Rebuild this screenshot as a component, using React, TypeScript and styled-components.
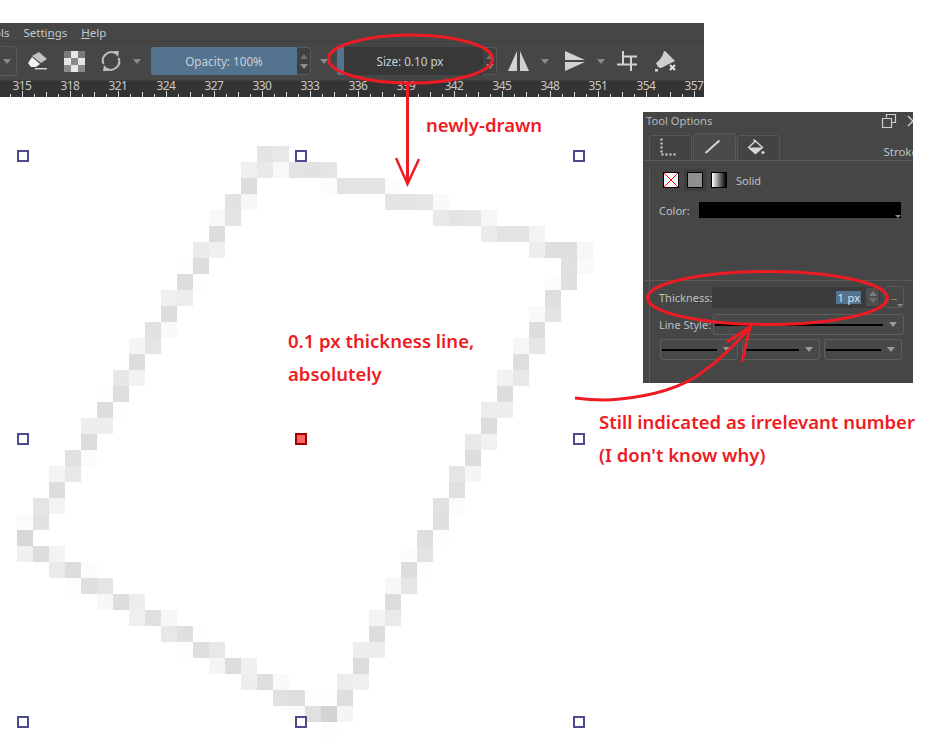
import React from "react";
import styled, { createGlobalStyle } from "styled-components";

const Global = createGlobalStyle`
  html, body { margin: 0; padding: 0; background: #fff; }
  body { font-family: "Noto Sans", "Liberation Sans", sans-serif; }
`;

const Stage = styled.div`
  position: relative;
  width: 935px;
  height: 754px;
  padding-top: 23px;
  box-sizing: border-box;
  overflow: hidden;
  background: #fff;
`;

const KritaBar = styled.div`
  width: 704px;
  background: #464646;
  color: #c3c9cc;
  font-size: 11.7px;
  overflow: hidden;
`;

const MenuRow = styled.div`
  height: 19px;
  box-sizing: border-box;
  display: flex;
  align-items: center;
  margin-left: -6px;
  gap: 14px;
  font-size: 11.5px;
  padding-top: 1px;
  border-bottom: 1px solid #3e3e3e;
`;

const MenuItem = styled.span`
  line-height: 18px;
  u { text-underline-offset: 1px; }
`;

const ToolRow = styled.div`
  height: 38px;
  display: flex;
  align-items: center;
`;

const CutCombo = styled.div`
  width: 17px;
  height: 30px;
  box-sizing: border-box;
  border: 1px solid #5a5a5a;
  border-left: none;
  border-radius: 0 4px 4px 0;
  display: flex;
  align-items: center;
  padding-left: 3px;
`;

const Caret = styled.span<{ $ml?: number; $c?: string }>`
  display: block;
  flex: none;
  width: 0;
  height: 0;
  margin-left: ${(p) => p.$ml ?? 0}px;
  border-left: 4px solid transparent;
  border-right: 4px solid transparent;
  border-top: 5px solid ${(p) => p.$c ?? "#8a8a8a"};
`;

const IconSlot = styled.svg<{ $ml: number; $w: number }>`
  display: block;
  flex: none;
  margin-left: ${(p) => p.$ml}px;
  width: ${(p) => p.$w}px;
  height: 22px;
`;

const SliderBox = styled.div<{ $ml: number }>`
  display: flex;
  flex: none;
  margin-left: ${(p) => p.$ml}px;
  width: 160px;
  height: 28px;
`;

const Track = styled.div<{ $fill: number }>`
  width: 146px;
  height: 28px;
  line-height: 29px;
  text-align: center;
  color: #c8d2da;
  border-radius: 2px 0 0 2px;
  background: linear-gradient(
    to right,
    #54738f ${(p) => p.$fill}%,
    #383838 ${(p) => p.$fill}%
  );
`;

const Spin = styled.div`
  flex: 1;
  box-sizing: border-box;
  border: 1px solid #585858;
  border-left: none;
  border-radius: 0 4px 4px 0;
  display: flex;
  flex-direction: column;
  align-items: center;
  justify-content: center;
  gap: 5px;
  background: #404040;
`;

const SpinUp = styled.span<{ $c?: string }>`
  width: 0;
  height: 0;
  border-left: 4px solid transparent;
  border-right: 4px solid transparent;
  border-bottom: 5px solid ${(p) => p.$c ?? "#707070"};
`;

const SpinDown = styled.span<{ $c?: string }>`
  width: 0;
  height: 0;
  border-left: 4px solid transparent;
  border-right: 4px solid transparent;
  border-top: 5px solid ${(p) => p.$c ?? "#8e8e8e"};
`;

const Ruler = styled.div`
  height: 17px;
  background: #333;
  display: flex;
  margin-left: -2px;
  border-top: 1px solid #3b3b3b;
  box-sizing: border-box;
`;

const RulerCell = styled.div`
  flex: none;
  width: 48px;
  display: flex;
  flex-direction: column;
  justify-content: flex-end;
  align-items: stretch;
`;

const RulerLabel = styled.span`
  height: 13px;
  line-height: 13px;
  margin-bottom: -1px;
  text-align: center;
  font-size: 12px;
  color: #c9c9c9;
  letter-spacing: -0.6px;
`;

const TickRow = styled.div`
  display: flex;
  align-items: flex-end;
  height: 6px;
`;

const Tick = styled.i<{ $h: number }>`
  display: block;
  box-sizing: border-box;
  width: 12px;
  height: ${(p) => p.$h}px;
  border-left: 1px solid #dcdcdc;
`;

const Panel = styled.section`
  position: absolute;
  left: 643px;
  top: 112px;
  width: 270px;
  height: 271px;
  background: #464646;
  color: #bcc1c4;
  font-size: 11px;
  overflow: hidden;
`;

const TitleBar = styled.header`
  height: 17px;
  padding: 0 0 1px 3px;
  display: flex;
  align-items: center;
  font-size: 11.2px;
  color: #b4babd;
`;

const TitleText = styled.span`
  flex: 1;
`;

const TitleIcon = styled.svg<{ $mr: number }>`
  display: block;
  width: 16px;
  height: 16px;
  margin-right: ${(p) => p.$mr}px;
  flex: none;
`;

const TabRow = styled.div`
  display: flex;
  align-items: flex-end;
  height: 31px;
  padding-left: 6px;
  box-sizing: border-box;
  border-bottom: 1px solid #5a5a5a;
`;

const Tab = styled.div<{ $active?: boolean }>`
  flex: none;
  width: 43px;
  box-sizing: border-box;
  height: ${(p) => (p.$active ? 27 : 25)}px;
  margin-right: 1px;
  background: ${(p) => (p.$active ? "#4a4a4a" : "#434343")};
  border: 1px solid #585858;
  border-bottom: none;
  border-radius: 4px 4px 0 0;
  display: flex;
  align-items: center;
  justify-content: center;
`;

const TabIcon = styled.svg`
  display: block;
  width: 24px;
  height: 22px;
`;

const StrokeTab = styled.span`
  margin-left: auto;
  margin-right: -5px;
  margin-bottom: 1px;
  font-size: 11.5px;
  white-space: nowrap;
`;

const TabBody = styled.div`
  margin-left: 6px;
  height: 223px;
  border-left: 1px solid #5a5a5a;
`;

const SwatchRow = styled.div`
  display: flex;
  align-items: center;
  height: 22px;
  margin-top: 8px;
  padding-left: 11px;
`;

const Swatch = styled.div<{ $kind: "none" | "flat" | "grad" }>`
  flex: none;
  box-sizing: border-box;
  width: 16px;
  height: 16px;
  margin: 0 8px 0 ${(p) => (p.$kind === "none" ? 2 : 0)}px;
  border: 1px solid #000;
  outline: ${(p) => (p.$kind === "flat" ? "3px solid #3e3e3e" : "none")};
  background: ${(p) =>
    p.$kind === "flat"
      ? "#8f8f8f"
      : p.$kind === "grad"
        ? "linear-gradient(to right, #fff, #000)"
        : `linear-gradient(45deg, #fff 47%, #f00 47%, #f00 53%, #fff 53%) , #fff`};
  position: relative;
`;

const SwatchCross = styled.span`
  position: absolute;
  inset: 0;
  background: linear-gradient(-45deg, transparent 47%, #f00 47%, #f00 53%, transparent 53%);
`;

const SwatchLabel = styled.span`
  margin-left: 1px;
`;

const FieldRow = styled.div<{ $top: number; $h?: number }>`
  display: flex;
  align-items: center;
  margin-top: ${(p) => p.$top}px;
  height: ${(p) => p.$h ?? 16}px;
  padding-left: 9px;
`;

const FieldLabel = styled.span<{ $w: number }>`
  flex: none;
  width: ${(p) => p.$w}px;
  white-space: nowrap;
`;

const ColorBar = styled.div`
  position: relative;
  width: 202px;
  height: 16px;
  background: #000;
`;

const BarCaret = styled.span`
  position: absolute;
  right: 0;
  bottom: 0;
  width: 0;
  height: 0;
  border-left: 3px solid transparent;
  border-right: 3px solid transparent;
  border-top: 3px solid #8a8a8a;
`;

const Divider = styled.div`
  margin-top: 62px;
  height: 1px;
  background: #5a5a5a;
  margin-left: -6px;
`;

const ThickInput = styled.div`
  width: 168px;
  height: 21px;
  box-sizing: border-box;
  background: #3b3b3b;
  border-radius: 3px;
  display: flex;
  align-items: center;
  justify-content: flex-end;
  padding-right: 1px;
`;

const Selected = styled.span`
  background: #54738f;
  color: #dfe6ea;
  height: 13px;
  line-height: 13px;
  padding: 0 1px;
  word-spacing: 1px;
  margin-right: 5px;
`;

const ThickSpin = styled.div`
  width: 13px;
  height: 18px;
  background: #4e4e4e;
  display: flex;
  flex-direction: column;
  align-items: center;
  justify-content: center;
  gap: 2px;
`;

const MoreButton = styled.div`
  position: relative;
  margin-left: 4px;
  width: 20px;
  height: 22px;
  box-sizing: border-box;
  border: 1px solid #5a5a5a;
  border-radius: 4px;
  font-size: 9px;
  line-height: 20px;
  padding-left: 6px;
  letter-spacing: -0.5px;
`;

const Combo = styled.div<{ $w: number; $ml?: number }>`
  flex: none;
  width: ${(p) => p.$w}px;
  height: 21px;
  box-sizing: border-box;
  margin-left: ${(p) => p.$ml ?? 0}px;
  border: 1px solid #5e5e5e;
  border-radius: 3px;
  background: #484848;
  display: flex;
  align-items: center;
  padding: 0 6px 0 1px;
`;

const ComboLine = styled.span`
  flex: 1;
  height: 2px;
  background: #000;
  margin-right: 6px;
`;

const ComboGroup = styled.div`
  display: flex;
  margin-top: 4px;
  padding-left: 10px;
`;

const Overlay = styled.svg`
  position: absolute;
  left: 0;
  top: 0;
  width: 935px;
  height: 754px;
  pointer-events: none;
`;

const Note = styled.div<{ $x: number; $y: number }>`
  position: absolute;
  left: ${(p) => p.$x}px;
  top: ${(p) => p.$y}px;
  color: #ed1c24;
  font-family: "Noto Sans", "Liberation Sans", sans-serif;
  font-weight: 600;
  font-size: 18.5px;
  line-height: 33px;
  white-space: nowrap;
`;

const pixels: [number, string][] = [
  [9, "16e4 17e8"],
  [10, "15f0 16e9 17f8 18e3 19e2 20e5"],
  [11, "15dd 20fc 21e3 22e3 23e3 24fc"],
  [12, "14e2 15f7 24e4 25e3 26e6 27fa"],
  [13, "13f8 14e4 27e9 28e4 29e6 30f6"],
  [14, "13dd 30eb 31e3 32e3 33f3"],
  [15, "12eb 13f0 33ee 34df 35df 36f6"],
  [16, "11fd 12dd 35e0 36f9"],
  [17, "11dd 12fe 34fc 35df"],
  [18, "10f0 11ec 34df"],
  [19, "10dd 33f9 34e3"],
  [20, "09e1 10f9 33dd"],
  [21, "08f5 09e5 32f6 33e6"],
  [22, "08dd 32de"],
  [23, "07e7 08f2 31f2 32e8"],
  [24, "06fd 07de 31dd"],
  [25, "06dd 07fe 30ec 31ee"],
  [26, "05ed 06ee 30dd"],
  [27, "05dc 29e9 30f1"],
  [28, "04e1 05fb 29dd"],
  [29, "03f3 04e8 28e5 29f5"],
  [30, "03dd 28e0"],
  [31, "02e5 03f3 27e1 28fb"],
  [32, "01fb 02e2 27df"],
  [33, "01d7 26df 27fd"],
  [34, "01f0 02dd 03f3 25fc 26e3"],
  [35, "03ea 04dd 05fc 25dd 26fe"],
  [36, "04fd 05df 06e5 24f7 25e5"],
  [37, "06f7 07dd 08ed 24dd"],
  [38, "08ef 09e0 10f6 23f3 24ea"],
  [39, "10e8 11df 12fe 23dd"],
  [40, "11fd 12de 13e8 22ee 23ed"],
  [41, "13f5 14dd 15f0 22dc"],
  [42, "15ee 16de 17f9 21ec 22f0"],
  [43, "17e1 18df 19fd 20fe 21de"],
  [44, "18fb 19e0 20d3 21f5"],
  [45, "20fd"],
];

const cells = pixels.flatMap(([row, s]) =>
  s.split(" ").map((c) => ({
    row,
    col: parseInt(c.slice(0, 2), 10),
    shade: c.slice(2),
  }))
);

const handles = [17, 295, 573].flatMap((x) => [150, 433, 716].map((y) => ({ x, y })));

const rulerLabels = Array.from({ length: 15 }, (_, i) => 315 + i * 3);

const ComboCaret = () => <Caret $c="#9a9a9a" />;

export default function App() {
  return (
    <Stage>
      <Global />
      <KritaBar>
        <MenuRow>
          <MenuItem>ols</MenuItem>
          <MenuItem>
            Setti<u>n</u>gs
          </MenuItem>
          <MenuItem>
            <u>H</u>elp
          </MenuItem>
        </MenuRow>
        <ToolRow>
          <CutCombo>
            <Caret />
          </CutCombo>
          <IconSlot $ml={11} $w={20} viewBox="0 0 20 22">
            <polygon points="11,2 19,9 13,13 4,6" fill="#c4c4c4" />
            <polygon points="4,7 12,14 8,17 3,17 0,13" fill="#f2f2f2" />
            <rect x="7" y="18" width="12" height="1.4" fill="#dcdcdc" />
          </IconSlot>
          <IconSlot $ml={16} $w={21} viewBox="0 0 21 22">
            <rect x="0" y="1" width="21" height="21" fill="#e6e6e6" />
            <rect x="0" y="1" width="7" height="7" fill="#7a7a7a" />
            <rect x="14" y="1" width="7" height="7" fill="#7a7a7a" />
            <rect x="7" y="8" width="7" height="7" fill="#8a8a8a" />
            <rect x="0" y="15" width="7" height="7" fill="#8a8a8a" />
            <rect x="14" y="15" width="7" height="7" fill="#8a8a8a" />
          </IconSlot>
          <IconSlot $ml={16} $w={20} viewBox="0 0 20 22">
            <path d="M2.5 14 A8.5 8.5 0 0 1 15 3.6" fill="none" stroke="#bdbdbd" strokeWidth="2" />
            <path d="M17.5 8 A8.5 8.5 0 0 1 5 18.4" fill="none" stroke="#bdbdbd" strokeWidth="2" />
            <polygon points="12,1 18,1 17,7" fill="#bdbdbd" />
            <polygon points="8,21 2,21 3,15" fill="#bdbdbd" />
          </IconSlot>
          <Caret $ml={12} />
          <SliderBox $ml={10}>
            <Track $fill={100}>Opacity: 100%</Track>
            <Spin>
              <SpinUp />
              <SpinDown />
            </Spin>
          </SliderBox>
          <Caret $ml={9} />
          <SliderBox $ml={9}>
            <Track $fill={5}>Size: 0.10 px</Track>
            <Spin>
              <SpinUp />
              <SpinDown />
            </Spin>
          </SliderBox>
          <IconSlot $ml={11} $w={21} viewBox="0 0 21 22">
            <polygon points="0,21 9,1 9,21" fill="#d2d2d2" />
            <polygon points="12,1 21,21 12,21" fill="#d2d2d2" />
          </IconSlot>
          <Caret $ml={12} />
          <IconSlot $ml={16} $w={20} viewBox="0 0 20 22">
            <polygon points="0,1 20,10 0,10" fill="#d2d2d2" />
            <polygon points="0,12 20,12 0,21" fill="#d2d2d2" />
          </IconSlot>
          <Caret $ml={12} />
          <IconSlot $ml={12} $w={20} viewBox="0 0 20 22">
            <path d="M6 1 V15 M0 14.5 H20 M6 6.5 H20 M14 6.5 V21" fill="none" stroke="#d2d2d2" strokeWidth="2" />
          </IconSlot>
          <IconSlot $ml={18} $w={21} viewBox="0 0 21 22">
            <path d="M9 1 Q11 1 12 3 L20 11 L6 18 Q3 18 2 15 L1 13 Q7 9 9 1Z" fill="#cfcfcf" />
            <rect x="0" y="19" width="3" height="2.5" fill="#cfcfcf" />
            <path d="M15 15 L20 20 M20 15 L15 20" stroke="#e6e6e6" strokeWidth="2" />
          </IconSlot>
        </ToolRow>
        <Ruler>
          {rulerLabels.map((n) => (
            <RulerCell key={n}>
              <RulerLabel>{n}</RulerLabel>
              <TickRow>
                <Tick $h={5} />
                <Tick $h={3} />
                <Tick $h={6} />
                <Tick $h={3} />
              </TickRow>
            </RulerCell>
          ))}
        </Ruler>
      </KritaBar>

      <Panel>
        <TitleBar>
          <TitleText>Tool Options</TitleText>
          <TitleIcon $mr={8} viewBox="0 0 16 16">
            <path d="M5.5 4.5 V1.5 H14.5 V9.5 H10.5 M1.5 5.5 H10.5 V14.5 H1.5Z" fill="none" stroke="#cfcfcf" strokeWidth="1.2" />
          </TitleIcon>
          <TitleIcon $mr={-8} viewBox="0 0 16 16">
            <path d="M3 3 L13 13 M13 3 L3 13" stroke="#cfcfcf" strokeWidth="1.4" />
          </TitleIcon>
        </TitleBar>
        <TabRow>
          <Tab>
            <TabIcon viewBox="0 0 24 22">
              <path d="M2.5 1.5 V17.5 H18" fill="none" stroke="#d6d6d6" strokeWidth="2" strokeDasharray="2 2" />
            </TabIcon>
          </Tab>
          <Tab $active>
            <TabIcon viewBox="0 0 24 22">
              <path d="M2.5 17 L16.5 4.5" stroke="#d2d2d2" strokeWidth="2" />
            </TabIcon>
          </Tab>
          <Tab>
            <TabIcon viewBox="0 0 24 22">
              <path d="M8.5 4 L15.5 10.5 L8.5 16.5 L1.5 10.5 Z" fill="none" stroke="#d6d6d6" strokeWidth="1.4" />
              <path d="M1.5 10.5 H15.5 L8.5 16.5 Z" fill="#d6d6d6" />
              <path d="M6.5 2.5 L9 5" stroke="#d6d6d6" strokeWidth="1.6" />
              <circle cx="16" cy="15.5" r="1.6" fill="#d6d6d6" />
            </TabIcon>
          </Tab>
          <StrokeTab>Stroke</StrokeTab>
        </TabRow>
        <TabBody>
          <SwatchRow>
            <Swatch $kind="none">
              <SwatchCross />
            </Swatch>
            <Swatch $kind="flat" />
            <Swatch $kind="grad" />
            <SwatchLabel>Solid</SwatchLabel>
          </SwatchRow>
          <FieldRow $top={11}>
            <FieldLabel $w={40}>Color:</FieldLabel>
            <ColorBar>
              <BarCaret />
            </ColorBar>
          </FieldRow>
          <Divider />
          <FieldRow $top={5} $h={22}>
            <FieldLabel $w={53}>Thickness:</FieldLabel>
            <ThickInput>
              <Selected>1 px</Selected>
              <ThickSpin>
                <SpinUp $c="#7c7c7c" />
                <SpinDown $c="#6c6c6c" />
              </ThickSpin>
            </ThickInput>
            <MoreButton>
              ...
              <BarCaret />
            </MoreButton>
          </FieldRow>
          <FieldRow $top={6} $h={21}>
            <FieldLabel $w={54}>Line Style:</FieldLabel>
            <Combo $w={191}>
              <ComboLine />
              <ComboCaret />
            </Combo>
          </FieldRow>
          <ComboGroup>
            <Combo $w={78}>
              <ComboLine />
              <ComboCaret />
            </Combo>
            <Combo $w={78} $ml={4}>
              <ComboLine />
              <ComboCaret />
            </Combo>
            <Combo $w={78} $ml={4}>
              <ComboLine />
              <ComboCaret />
            </Combo>
          </ComboGroup>
        </TabBody>
      </Panel>

      <Overlay viewBox="0 0 935 754">
        <g shapeRendering="crispEdges">
          {cells.map((c) => (
            <rect
              key={`${c.row}-${c.col}`}
              x={1 + c.col * 16}
              y={2 + c.row * 16}
              width="16"
              height="16"
              fill={`#${c.shade}${c.shade}${c.shade}`}
            />
          ))}
          {handles.map((h) => {
            const center = h.x === 295 && h.y === 433;
            return (
              <rect
                key={`${h.x}-${h.y}`}
                x={h.x + 1}
                y={h.y + 1}
                width="10"
                height="10"
                fill={center ? "#ff6464" : "#fff"}
                stroke={center ? "#a00000" : "#4b4b8e"}
                strokeWidth="2"
              />
            );
          })}
        </g>
        <g fill="none" stroke="#ed1c24">
          <ellipse cx="410.5" cy="59" rx="82" ry="24" strokeWidth="3" />
          <path d="M407.5 84 V184" strokeWidth="3" />
          <path d="M396 158 L407.5 184 L419 159" strokeWidth="2.5" />
          <ellipse cx="767.5" cy="298" rx="120" ry="26.5" strokeWidth="3" />
          <path
            d="M575 398 C590 400 605 401 620 399 C650 396 680 388 700 374 C720 360 735 345 750 327"
            strokeWidth="3"
          />
          <path d="M727 342 L750 327 L742 362" strokeWidth="3" />
        </g>
      </Overlay>

      <Note $x={426} $y={108}>newly-drawn</Note>
      <Note $x={288} $y={324}>
        0.1 px thickness line,
        <br />
        absolutely
      </Note>
      <Note $x={599} $y={405}>
        Still indicated as irrelevant number
        <br />
        (I don't know why)
      </Note>
    </Stage>
  );
}
